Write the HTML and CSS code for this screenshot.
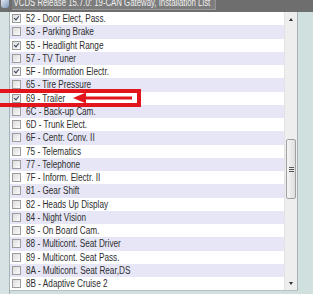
FILE: index.html
```html
<!DOCTYPE html>
<html lang="en">
<head>
    <meta charset="UTF-8">
    <meta name="viewport" content="width=device-width, initial-scale=1.0">
    <title>VCDS Installation List</title>
    <link rel="stylesheet" href="styles.css">
</head>
<body>
    <header class="titlebar">
        <span class="app-icon"></span>
        <span class="title-label">VCDS Release 15.7.0: 19-CAN Gateway, Installation List</span>
    </header>

    <div class="window">
        <div class="side-strip"></div>

        <section class="list-panel">
            <ul class="module-list">
                <li class="row"><span class="box checked"></span><span class="label">52 - Door Elect, Pass.</span></li>
                <li class="row"><span class="box"></span><span class="label">53 - Parking Brake</span></li>
                <li class="row"><span class="box checked"></span><span class="label">55 - Headlight Range</span></li>
                <li class="row"><span class="box"></span><span class="label">57 - TV Tuner</span></li>
                <li class="row"><span class="box checked"></span><span class="label">5F - Information Electr.</span></li>
                <li class="row"><span class="box"></span><span class="label">65 - Tire Pressure</span></li>
                <li class="row"><span class="box checked"></span><span class="label">69 - Trailer</span></li>
                <li class="row"><span class="box"></span><span class="label">6C - Back-up Cam.</span></li>
                <li class="row"><span class="box"></span><span class="label">6D - Trunk Elect.</span></li>
                <li class="row"><span class="box"></span><span class="label">6F - Centr. Conv. II</span></li>
                <li class="row"><span class="box"></span><span class="label">75 - Telematics</span></li>
                <li class="row"><span class="box"></span><span class="label">77 - Telephone</span></li>
                <li class="row"><span class="box"></span><span class="label">7F - Inform. Electr. II</span></li>
                <li class="row"><span class="box"></span><span class="label">81 - Gear Shift</span></li>
                <li class="row"><span class="box"></span><span class="label">82 - Heads Up Display</span></li>
                <li class="row"><span class="box"></span><span class="label">84 - Night Vision</span></li>
                <li class="row"><span class="box"></span><span class="label">85 - On Board Cam.</span></li>
                <li class="row"><span class="box"></span><span class="label">88 - Multicont. Seat Driver</span></li>
                <li class="row"><span class="box"></span><span class="label">89 - Multicont. Seat Pass.</span></li>
                <li class="row"><span class="box"></span><span class="label">8A - Multicont. Seat Rear,DS</span></li>
                <li class="row"><span class="box"></span><span class="label">8B - Adaptive Cruise 2</span></li>
            </ul>

            <div class="scrollbar">
                <span class="scroll-btn up"></span>
                <div class="scroll-track">
                    <div class="scroll-thumb"><span class="grip"></span></div>
                </div>
                <span class="scroll-btn down"></span>
            </div>
        </section>

        <div class="right-strip"></div>
    </div>

    <!-- highlight drawn over the list -->
    <div class="highlight">
        <svg class="arrow" width="60" height="12" viewBox="0 0 60 12">
            <polygon points="0,6 13,0.5 13,4.5 59,4.5 59,7.5 13,7.5 13,11.5" fill="#e2141c"/>
        </svg>
    </div>
</body>
</html>
```

FILE: styles.css
```css
:root {
    --title-bg: #6e6e6e;
    --side-bg: #d6e2e3;
    --right-bg: #cfe0df;
    --row-alt: #e6e6f6;
    --text-color: #2e2e2e;
    --red: #e2141c;
}

body {
    margin: 0;
    width: 313px;
    height: 294px;
    overflow: hidden;
    position: relative;
    background-color: var(--right-bg);
    font-family: "Liberation Sans", Arial, sans-serif;
}

.titlebar {
    height: 12px;
    background-color: var(--title-bg);
    display: flex;
    align-items: flex-start;
    overflow: hidden;
}

.app-icon {
    width: 8px;
    height: 8px;
    margin: 0 3px 0 1px;
    background: linear-gradient(135deg, #dfe8f2, #7d95b8);
    border-radius: 0 0 3px 3px;
}

.title-label {
    height: 9px;
    padding: 0 6px 0 2px;
    background-color: #7c7c7c;
    border-right: 1px solid #a9a9a9;
    border-bottom: 1px solid #9a9a9a;
    color: #f0f0f0;
    font-size: 10px;
    line-height: 5px;
    white-space: nowrap;
    transform: scaleX(0.78);
    transform-origin: left top;
}

.window {
    display: flex;
    height: 282px;
}

.side-strip {
    width: 9px;
    background-color: var(--side-bg);
    border-right: 1px solid #a7b4b6;
}

.list-panel {
    width: 288px;
    height: 278px;
    display: flex;
    background-color: #fff;
    border-bottom: 1px solid #b9c0c0;
}

.module-list {
    list-style: none;
    margin: 0;
    padding: 0;
    flex: 1;
}

.row {
    height: 13.25px;
    display: flex;
    align-items: center;
    padding-left: 2px;
    font-size: 10px;
    color: var(--text-color);
    white-space: nowrap;
}

.row:nth-child(even) {
    background-color: var(--row-alt);
}

/* the list font is a narrow one, Arial squeezed comes closest */
.label {
    display: inline-block;
    transform: scaleX(0.82);
    transform-origin: left center;
}

.box {
    width: 7px;
    height: 7px;
    margin-right: 5px;
    border: 1px solid #9c9c9c;
    background: linear-gradient(135deg, #dcdcdc, #fbfbfb);
    flex-shrink: 0;
    position: relative;
}

.box.checked::after {
    content: "";
    position: absolute;
    left: 1px;
    top: 0;
    width: 2px;
    height: 4px;
    border-right: 1.5px solid #34435a;
    border-bottom: 1.5px solid #34435a;
    transform: translateX(1px) rotate(40deg);
}

.scrollbar {
    width: 12px;
    display: flex;
    flex-direction: column;
    background-color: #eeeeee;
    border-left: 1px solid #e2e2e2;
    border-right: 1px solid #a9b3b3;
}

.scroll-btn {
    height: 14px;
    display: flex;
    align-items: center;
    justify-content: center;
}

.scroll-btn::before {
    content: "";
    border-left: 2.5px solid transparent;
    border-right: 2.5px solid transparent;
}

.scroll-btn.up::before {
    border-bottom: 3px solid #333;
}

.scroll-btn.down::before {
    border-top: 3px solid #333;
}

.scroll-track {
    flex: 1;
}

.scroll-thumb {
    margin: 113px 1px 0 1px;
    height: 58px;
    border: 1px solid #a0a0a0;
    border-radius: 2px;
    background: linear-gradient(90deg, #f6f6f6, #dedede);
    display: flex;
    align-items: center;
    justify-content: center;
}

.grip {
    width: 5px;
    height: 5px;
    background: repeating-linear-gradient(180deg, #555 0, #555 1px, transparent 1px, transparent 2px);
}

.right-strip {
    flex: 1;
    background-color: var(--right-bg);
}

.highlight {
    position: absolute;
    left: -10px;
    top: 89px;
    width: 143px;
    height: 10px;
    border: 4px solid var(--red);
}

.arrow {
    position: absolute;
    left: 79px;
    top: -1px;
}
```
